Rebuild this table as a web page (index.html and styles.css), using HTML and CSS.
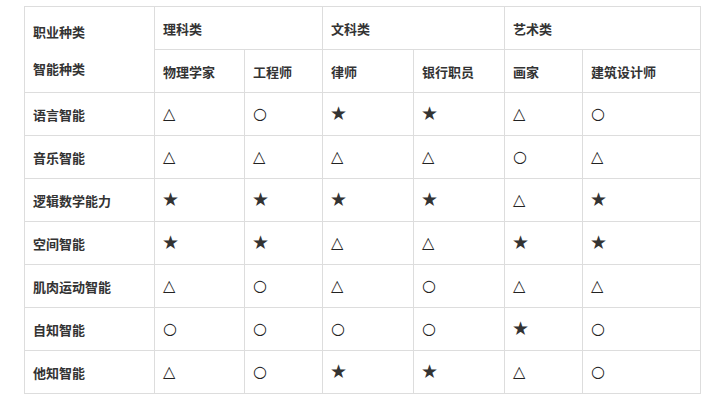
FILE: index.html
```html
<!DOCTYPE html>
<html lang="zh">
<head>
<meta charset="utf-8">
<link rel="stylesheet" href="styles.css">
</head>
<body>
<div class="wrap">
<table class="grid">
  <colgroup>
    <col class="c1"><col class="c2"><col class="c3"><col class="c4"><col class="c5"><col class="c6"><col class="c7">
  </colgroup>
  <thead>
    <tr>
      <th rowspan="2" class="corner"><span class="l1">职业种类</span><span class="l2">智能种类</span></th>
      <th colspan="2">理科类</th>
      <th colspan="2">文科类</th>
      <th colspan="2">艺术类</th>
    </tr>
    <tr>
      <th>物理学家</th><th>工程师</th><th>律师</th><th>银行职员</th><th>画家</th><th>建筑设计师</th>
    </tr>
  </thead>
  <tbody>
    <tr><th>语言智能</th><td><span class="tri">△</span></td><td><span class="cir">○</span></td><td><span class="star">★</span></td><td><span class="star">★</span></td><td><span class="tri">△</span></td><td><span class="cir">○</span></td></tr>
    <tr><th>音乐智能</th><td><span class="tri">△</span></td><td><span class="tri">△</span></td><td><span class="tri">△</span></td><td><span class="tri">△</span></td><td><span class="cir">○</span></td><td><span class="tri">△</span></td></tr>
    <tr><th>逻辑数学能力</th><td><span class="star">★</span></td><td><span class="star">★</span></td><td><span class="star">★</span></td><td><span class="star">★</span></td><td><span class="tri">△</span></td><td><span class="star">★</span></td></tr>
    <tr><th>空间智能</th><td><span class="star">★</span></td><td><span class="star">★</span></td><td><span class="tri">△</span></td><td><span class="tri">△</span></td><td><span class="star">★</span></td><td><span class="star">★</span></td></tr>
    <tr><th>肌肉运动智能</th><td><span class="tri">△</span></td><td><span class="cir">○</span></td><td><span class="tri">△</span></td><td><span class="cir">○</span></td><td><span class="tri">△</span></td><td><span class="tri">△</span></td></tr>
    <tr><th>自知智能</th><td><span class="cir">○</span></td><td><span class="cir">○</span></td><td><span class="cir">○</span></td><td><span class="cir">○</span></td><td><span class="star">★</span></td><td><span class="cir">○</span></td></tr>
    <tr><th>他知智能</th><td><span class="tri">△</span></td><td><span class="cir">○</span></td><td><span class="star">★</span></td><td><span class="star">★</span></td><td><span class="tri">△</span></td><td><span class="cir">○</span></td></tr>
  </tbody>
</table>
</div>
</body>
</html>
```
FILE: styles.css
```css
html, body {
  margin: 0;
  padding: 0;
  background: #fff;
}
.wrap {
  padding: 6px 0 0 24px;
}
.grid {
  border-collapse: collapse;
  table-layout: fixed;
  width: 677px;
  font-family: "Noto Sans CJK SC", "Noto Sans", sans-serif;
  font-size: 13px;
  color: #333;
}
.c1 { width: 130px; }
.c2 { width: 90px; }
.c3 { width: 78px; }
.c4 { width: 91px; }
.c5 { width: 91px; }
.c6 { width: 78px; }
.c7 { width: 118px; }
.grid th, .grid td {
  border: 1px solid #ddd;
  height: 43px;
  padding: 0 8px;
  text-align: left;
  vertical-align: middle;
  line-height: 18px;
  box-sizing: border-box;
}
.grid th {
  font-weight: bold;
  padding-top: 1px;
}
.grid td {
  font-family: "DejaVu Sans", sans-serif;
  font-weight: normal;
  font-size: 15px;
  color: #222;
  padding-top: 0;
}
.tri, .cir, .star {
  display: inline-block;
  line-height: 18px;
}
.tri { font-size: 16px; }
.cir { font-size: 16px; }
.star { font-size: 19px; color: #333; margin-left: -1px; }
.corner .l1, .corner .l2 {
  display: block;
}
.corner .l2 {
  margin-top: 19px;
}
```
